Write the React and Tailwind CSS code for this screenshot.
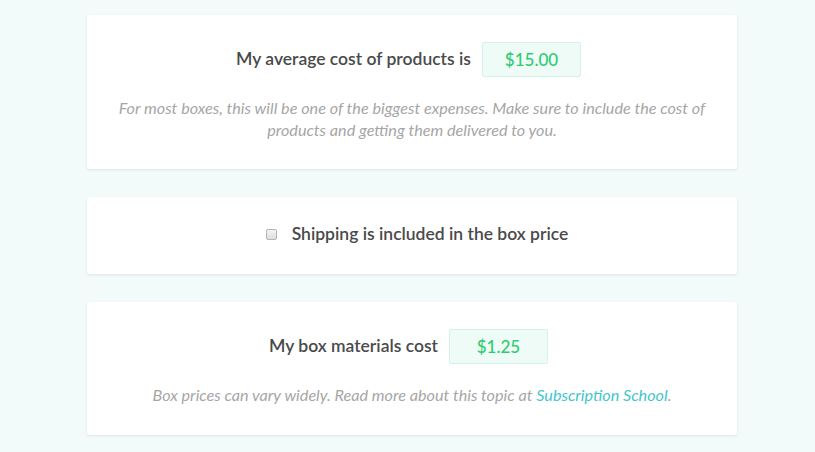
export default function App() {
  const font = { fontFamily: 'Lato, "Open Sans", sans-serif' };
  return (
    <div className="min-h-[452px] w-full bg-[#f2fbf9] pt-[15px] pb-4" style={font}>
      <div className="ml-[87px] flex w-[650px] flex-col gap-[28px]">
        <div className="rounded-[2px] bg-white px-7 pt-[27px] pb-[28px] shadow-[0_1px_3px_rgba(0,0,0,0.09)]">
          <div className="mr-[7px] flex items-center justify-center gap-[11px]">
            <span className="text-[17.5px] font-semibold text-[#4a4a4a]">My average cost of products is</span>
            <div className="flex h-[35px] w-[99px] items-center justify-center rounded-[2px] border border-[#d3f3e6] bg-[#effbf6] text-[17px] font-medium text-[#2ecc71]">$15.00</div>
          </div>
          <p className="mt-[20px] text-center text-[16.2px] italic leading-[22px] text-[#a6a6a6]">
            For most boxes, this will be one of the biggest expenses. Make sure to include the cost of products and getting them delivered to you.
          </p>
        </div>
        <div className="flex h-[77px] items-center justify-center gap-[15px] rounded-[2px] bg-white pb-[2px] pl-[10px] shadow-[0_1px_3px_rgba(0,0,0,0.09)]">
          <span className="inline-block h-[11px] w-[11px] rounded-[2px] border border-[#b5b5b5] bg-gradient-to-b from-[#f4f4f4] to-[#dedede]"></span>
          <span className="text-[17.5px] font-semibold text-[#4a4a4a]">Shipping is included in the box price</span>
        </div>
        <div className="rounded-[2px] bg-white px-7 pt-[27px] pb-[29px] shadow-[0_1px_3px_rgba(0,0,0,0.09)]">
          <div className="mr-[7px] flex items-center justify-center gap-[11px]">
            <span className="text-[17.5px] font-semibold text-[#4a4a4a]">My box materials cost</span>
            <div className="flex h-[35px] w-[99px] items-center justify-center rounded-[2px] border border-[#d3f3e6] bg-[#effbf6] text-[17px] font-medium text-[#2ecc71]">$1.25</div>
          </div>
          <p className="mt-[20px] text-center text-[16.2px] italic leading-[22px] text-[#a6a6a6]">
            Box prices can vary widely. Read more about this topic at <a className="text-[#3fc6cc]">Subscription School</a>.
          </p>
        </div>
      </div>
    </div>
  );
}
